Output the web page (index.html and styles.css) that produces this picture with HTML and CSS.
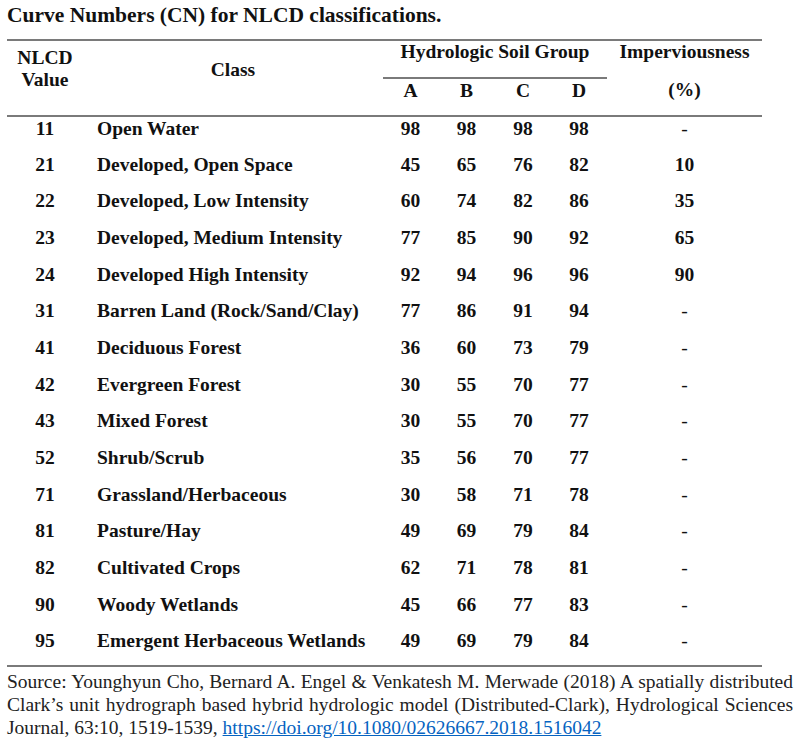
FILE: index.html
```html
<!DOCTYPE html>
<html>
<head>
<meta charset="utf-8">
<link rel="stylesheet" href="styles.css">
</head>
<body>
<div class="page">
  <h1 class="title">Curve Numbers (CN) for NLCD classifications.</h1>
  <table class="cn">
    <colgroup>
      <col class="c-val"><col class="c-class"><col class="c-a"><col class="c-b"><col class="c-c"><col class="c-d"><col class="c-imp">
    </colgroup>
    <thead>
      <tr class="h1">
        <th rowspan="2" class="h-val">NLCD<br>Value</th>
        <th rowspan="2" class="h-class">Class</th>
        <th colspan="4" class="h-hsg">Hydrologic Soil Group</th>
        <th class="h-imp">Imperviousness</th>
      </tr>
      <tr class="h2">
        <th>A</th><th>B</th><th>C</th><th>D</th><th>(%)</th>
      </tr>
    </thead>
    <tbody>
      <tr><td>11</td><td class="cls">Open Water</td><td>98</td><td>98</td><td>98</td><td>98</td><td class="dash">-</td></tr>
      <tr><td>21</td><td class="cls">Developed, Open Space</td><td>45</td><td>65</td><td>76</td><td>82</td><td>10</td></tr>
      <tr><td>22</td><td class="cls">Developed, Low Intensity</td><td>60</td><td>74</td><td>82</td><td>86</td><td>35</td></tr>
      <tr><td>23</td><td class="cls">Developed, Medium Intensity</td><td>77</td><td>85</td><td>90</td><td>92</td><td>65</td></tr>
      <tr><td>24</td><td class="cls">Developed High Intensity</td><td>92</td><td>94</td><td>96</td><td>96</td><td>90</td></tr>
      <tr><td>31</td><td class="cls">Barren Land (Rock/Sand/Clay)</td><td>77</td><td>86</td><td>91</td><td>94</td><td class="dash">-</td></tr>
      <tr><td>41</td><td class="cls">Deciduous Forest</td><td>36</td><td>60</td><td>73</td><td>79</td><td class="dash">-</td></tr>
      <tr><td>42</td><td class="cls">Evergreen Forest</td><td>30</td><td>55</td><td>70</td><td>77</td><td class="dash">-</td></tr>
      <tr><td>43</td><td class="cls">Mixed Forest</td><td>30</td><td>55</td><td>70</td><td>77</td><td class="dash">-</td></tr>
      <tr><td>52</td><td class="cls">Shrub/Scrub</td><td>35</td><td>56</td><td>70</td><td>77</td><td class="dash">-</td></tr>
      <tr><td>71</td><td class="cls">Grassland/Herbaceous</td><td>30</td><td>58</td><td>71</td><td>78</td><td class="dash">-</td></tr>
      <tr><td>81</td><td class="cls">Pasture/Hay</td><td>49</td><td>69</td><td>79</td><td>84</td><td class="dash">-</td></tr>
      <tr><td>82</td><td class="cls">Cultivated Crops</td><td>62</td><td>71</td><td>78</td><td>81</td><td class="dash">-</td></tr>
      <tr><td>90</td><td class="cls">Woody Wetlands</td><td>45</td><td>66</td><td>77</td><td>83</td><td class="dash">-</td></tr>
      <tr><td>95</td><td class="cls">Emergent Herbaceous Wetlands</td><td>49</td><td>69</td><td>79</td><td>84</td><td class="dash">-</td></tr>
    </tbody>
  </table>
  <p class="source">Source: Younghyun Cho, Bernard A. Engel &amp; Venkatesh M. Merwade (2018) A spatially distributed Clark’s unit hydrograph based hybrid hydrologic model (Distributed-Clark), Hydrological Sciences Journal, 63:10, 1519-1539, <a href="#">https://doi.org/10.1080/02626667.2018.1516042</a></p>
</div>
</body>
</html>
```

FILE: styles.css
```css
html, body {
  margin: 0;
  padding: 0;
  background: #ffffff;
}

.page {
  padding: 0 0 0 7px;
  font-family: "Liberation Serif", "Times New Roman", serif;
  color: #111;
}

.title {
  margin: 0;
  padding-top: 4px;
  height: 39px;
  box-sizing: border-box;
  font-size: 21.5px;
  line-height: 22px;
  font-weight: bold;
}

.cn {
  width: 755px;
  border-collapse: collapse;
  table-layout: fixed;
  font-size: 19.5px;
  font-weight: bold;
}

.c-val { width: 76px; }
.c-class { width: 300px; }
.c-a { width: 55px; }
.c-b { width: 57px; }
.c-c { width: 56px; }
.c-d { width: 56px; }
.c-imp { width: 155px; }

.cn th, .cn td {
  padding: 0;
  text-align: center;
}

.cn thead .h1 th {
  border-top: 2px solid #7a7a7a;
}

.cn .h1 {
  height: 38px;
}

.cn .h2 {
  height: 38px;
}

.cn .h2 th {
  border-bottom: 2px solid #7a7a7a;
  line-height: 22px;
  vertical-align: top;
  padding-top: 1px;
}

.h-val {
  vertical-align: top;
  padding-top: 6px !important;
  line-height: 22px;
  border-bottom: 2px solid #7a7a7a;
}

.h-class {
  vertical-align: top;
  padding-top: 18px !important;
  line-height: 22px;
  border-bottom: 2px solid #7a7a7a;
}

.h-hsg {
  border-bottom: 2px solid #7a7a7a;
  vertical-align: top;
  line-height: 22px;
  padding-top: 0;
}

.h-imp {
  vertical-align: top;
  line-height: 22px;
  padding-top: 0;
}

.cn tbody tr {
  height: 36.67px;
}

.cn tbody td {
  vertical-align: top;
  line-height: 22px;
  padding-top: 1px;
}

.cn tbody tr:last-child td {
  border-bottom: 2px solid #7a7a7a;
}

.cn td.cls {
  text-align: left;
  padding-left: 14px;
}

.cn td.dash {
  font-weight: normal;
}

.source {
  margin: 0;
  padding-top: 3px;
  width: 786px;
  font-size: 19.5px;
  line-height: 23px;
  font-weight: normal;
  text-align: justify;
  color: #222;
}

.source a {
  color: #0563c1;
  text-decoration: underline;
}
```
